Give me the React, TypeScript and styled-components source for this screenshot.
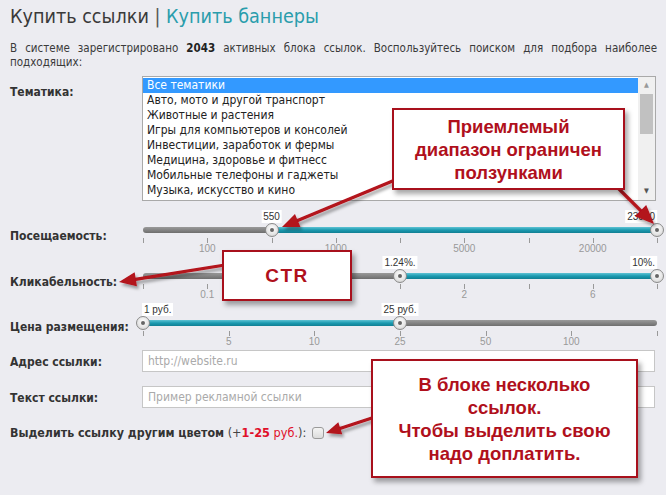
import React from 'react'
import styled, { createGlobalStyle } from 'styled-components'

const GlobalStyle = createGlobalStyle`
    html, body {
        margin: 0;
        padding: 0;
        background: #ececf1;
    }
    body {
        font-family: "DejaVu Sans Condensed", "DejaVu Sans", sans-serif;
        color: #333;
    }
`

const topics = [
    'Все тематики',
    'Авто, мото и другой транспорт',
    'Животные и растения',
    'Игры для компьютеров и консолей',
    'Инвестиции, заработок и фермы',
    'Медицина, здоровье и фитнесс',
    'Мобильные телефоны и гаджеты',
    'Музыка, искусство и кино',
]

interface Tick {
    label?: string
}

interface SliderProps {
    ticks: Tick[]
    lo: number
    hi: number
    loLabel: string
    hiLabel: string
}

const Slider = ({ ticks, lo, hi, loLabel, hiLabel }: SliderProps) => {
    const step = 100 / (ticks.length - 1)
    const align = (v: number) => (v <= 0 ? 'left' : v >= 1 ? 'right' : 'center')
    return (
        <StyledSlider>
            <Track />
            <Range style={{ left: `${lo * 100}%`, width: `${(hi - lo) * 100}%` }} />
            {[{ v: lo, t: loLabel }, { v: hi, t: hiLabel }].map((h, k) => (
                <React.Fragment key={k}>
                    <HandleLabel $align={align(h.v)} style={{ left: `${h.v * 100}%` }}>{h.t}</HandleLabel>
                    <Handle style={{ left: `${h.v * 100}%` }} />
                </React.Fragment>
            ))}
            {ticks.map((t, k) => (
                <TickMark key={k} style={{ left: `${k * step}%` }}>
                    {t.label && <span>{t.label}</span>}
                </TickMark>
            ))}
        </StyledSlider>
    )
}

const Arrow = ({ x1, y1, x2, y2, head = 16 }: { x1: number, y1: number, x2: number, y2: number, head?: number }) => {
    const len = Math.hypot(x2 - x1, y2 - y1)
    const ux = (x2 - x1) / len
    const uy = (y2 - y1) / len
    const bx = x2 - ux * head
    const by = y2 - uy * head
    const w = head * 0.42
    const pts = `${x2},${y2} ${bx - uy * w},${by + ux * w} ${bx + uy * w},${by - ux * w}`
    return (
        <g>
            <line x1={x1} y1={y1} x2={bx + ux * 2} y2={by + uy * 2} stroke="#b3121b" strokeWidth={3.2} />
            <polygon points={pts} fill="#b3121b" />
        </g>
    )
}

export default function App() {
    return (
        <Page>
            <GlobalStyle />
            <Title>Купить ссылки <span className="sep">|</span> <a>Купить баннеры</a></Title>
            <Intro>
                В системе зарегистрировано <b>2043</b> активных блока ссылок. Воспользуйтесь поиском для подбора наиболее подходящих:
            </Intro>

            <TopicRow>
                <Label $pad={9}>Тематика:</Label>
                <ListBox>
                    <Options>
                        {topics.map((t, k) => (
                            <Option key={k} $selected={k === 0}>{t}</Option>
                        ))}
                    </Options>
                    <ScrollBar>
                        <span className="up">▲</span>
                        <div className="thumb" />
                        <span className="down">▼</span>
                    </ScrollBar>
                </ListBox>
            </TopicRow>

            <SliderRow $mt={4}>
                <Label $pad={24}>Посещаемость:</Label>
                <Slider
                    ticks={[{}, { label: '100' }, {}, { label: '1000' }, {}, { label: '5000' }, {}, { label: '20000' }, {}]}
                    lo={0.25} hi={1} loLabel="550" hiLabel="23000"
                />
            </SliderRow>
            <SliderRow>
                <Label $pad={24}>Кликабельность:</Label>
                <Slider
                    ticks={[{}, { label: '0.1' }, {}, { label: '1' }, {}, { label: '2' }, {}, { label: '6' }, {}]}
                    lo={0.5} hi={1} loLabel="1.24%." hiLabel="10%."
                />
            </SliderRow>
            <SliderRow $mt={1}>
                <Label $pad={22}>Цена размещения:</Label>
                <Slider
                    ticks={[{}, { label: '5' }, { label: '10' }, { label: '25' }, { label: '50' }, { label: '100' }, {}]}
                    lo={0} hi={0.5} loLabel="1 руб." hiLabel="25 руб."
                />
            </SliderRow>

            <InputRow $mt={6}>
                <Label $pad={5}>Адрес ссылки:</Label>
                <TextInput placeholder="http://website.ru" />
            </InputRow>
            <InputRow $mt={14}>
                <Label $pad={5}>Текст ссылки:</Label>
                <TextInput placeholder="Пример рекламной ссылки" />
            </InputRow>

            <CheckRow>
                <b>Выделить ссылку другим цветом</b>
                <span>&nbsp;(+<Price>1-25</Price> <em>руб.</em>):</span>
                <Check />
            </CheckRow>

            <Arrows width={666} height={495}>
                <defs>
                    <filter id="sh" x="-10%" y="-10%" width="130%" height="130%">
                        <feDropShadow dx="2" dy="3" stdDeviation="1.6" floodColor="#000" floodOpacity="0.35" />
                    </filter>
                </defs>
                <g filter="url(#sh)">
                    <Arrow x1={395} y1={180} x2={282} y2={227} head={17} />
                    <Arrow x1={618} y1={188} x2={654} y2={224} head={19} />
                    <Arrow x1={225} y1={265} x2={119} y2={282} head={17} />
                    <Arrow x1={375} y1={417} x2={326} y2={433} head={15} />
                </g>
            </Arrows>

            <Callout $left={392} $top={108} $w={233} $h={82}>
                Приемлемый<br />диапазон ограничен<br />ползунками
            </Callout>
            <Callout $left={222} $top={250} $w={130} $h={51} $big>
                CTR
            </Callout>
            <Callout $left={371} $top={359} $w={267} $h={119}>
                В блоке несколько<br />ссылок.<br />Чтобы выделить свою<br />надо доплатить.
            </Callout>
        </Page>
    )
}

const Page = styled.div`
    position: relative;
    width: 666px;
    height: 495px;
    box-sizing: border-box;
    padding: 0 9px 0 10px;
    overflow: hidden;
    font-size: 12px;
`

const Title = styled.h1`
    margin: 4px 0 0;
    font-weight: normal;
    font-size: 19.6px;
    line-height: 26px;
    color: #3a3a3a;
    .sep {
        color: #555;
    }
    a {
        color: #2a9dac;
    }
`

const Intro = styled.p`
    margin: 11px 0 0;
    font-size: 11.5px;
    line-height: 14px;
    text-align: justify;
    color: #3a3a3a;
    b {
        color: #222;
    }
`

const Row = styled.div`
    display: grid;
    grid-template-columns: 132px 1fr;
`

const TopicRow = styled(Row)`
    margin-top: 7px;
`

const SliderRow = styled(Row)<{ $mt?: number }>`
    margin-top: ${p => p.$mt ?? 0}px;
`

const InputRow = styled(Row)<{ $mt: number }>`
    margin-top: ${p => p.$mt}px;
`

const Label = styled.div<{ $pad: number }>`
    padding-top: ${p => p.$pad}px;
    font-weight: bold;
    font-size: 12px;
    line-height: 14px;
    color: #333;
`

const ListBox = styled.div`
    display: flex;
    height: 125px;
    border: 1px solid #a9a9a9;
    background: #fff;
    box-sizing: border-box;
    width: 514px;
`

const Options = styled.div`
    flex: 1;
    padding-top: 1px;
`

const Option = styled.div<{ $selected?: boolean }>`
    height: 15px;
    line-height: 15px;
    padding-left: 4px;
    font-size: 12px;
    color: ${p => (p.$selected ? '#fff' : '#222')};
    background: ${p => (p.$selected ? '#3399ff' : 'transparent')};
`

const ScrollBar = styled.div`
    width: 17px;
    background: #f0f0f0;
    display: flex;
    flex-direction: column;
    align-items: center;
    color: #999;
    font-size: 7px;
    .up {
        height: 17px;
        line-height: 17px;
    }
    .thumb {
        width: 13px;
        height: 40px;
        background: #c1c1c1;
    }
    .down {
        margin-top: auto;
        height: 17px;
        line-height: 17px;
        color: #555;
    }
`

const StyledSlider = styled.div`
    position: relative;
    height: 46px;
    margin-left: 1px;
    width: 514px;
`

const Track = styled.div`
    position: absolute;
    left: 0;
    right: 0;
    top: 22px;
    height: 6px;
    border-radius: 3px;
    background: linear-gradient(#9a9a9a, #6e6e6e);
`

const Range = styled.div`
    position: absolute;
    top: 22px;
    height: 6px;
    border-radius: 3px;
    background: linear-gradient(#5fc3d4, #1b9ab0 50%, #117f93);
`

const Handle = styled.div`
    position: absolute;
    top: 18px;
    width: 14px;
    height: 14px;
    margin-left: -7px;
    box-sizing: border-box;
    border-radius: 50%;
    border: 1px solid #8a8a8a;
    background: radial-gradient(circle at 50% 40%, #fff, #e4e4e4 60%, #c4c4c4);
    &::after {
        content: '';
        position: absolute;
        left: 4px;
        top: 4px;
        width: 4px;
        height: 4px;
        border-radius: 50%;
        background: #666;
    }
`

const HandleLabel = styled.div<{ $align: string }>`
    position: absolute;
    top: 5px;
    padding: 0 2px;
    height: 13px;
    line-height: 13px;
    background: #fff;
    font-family: "Liberation Sans", Arial, sans-serif;
    font-size: 10px;
    color: #333;
    white-space: nowrap;
    transform: ${p => (p.$align === 'left' ? 'translateX(-1px)' : p.$align === 'right' ? 'translateX(-100%)' : 'translateX(-50%)')};
`

const TickMark = styled.div`
    position: absolute;
    top: 33px;
    width: 1px;
    height: 5px;
    background: #999;
    span {
        position: absolute;
        top: 5px;
        left: 0;
        transform: translateX(-50%);
        font-family: "Liberation Sans", Arial, sans-serif;
        font-size: 10px;
        line-height: 11px;
        color: #999;
        white-space: nowrap;
    }
`

const TextInput = styled.input`
    width: 513px;
    height: 22px;
    box-sizing: border-box;
    border: 1px solid #c6c6c6;
    background: #fff;
    padding: 0 5px;
    font-family: inherit;
    font-size: 12px;
    outline: 0;
    &::placeholder {
        color: #aaa;
    }
`

const CheckRow = styled.div`
    margin-top: 18px;
    display: flex;
    align-items: center;
    font-size: 12.3px;
    line-height: 14px;
    b {
        color: #333;
    }
    span {
        color: #444;
        font-size: 12.6px;
    }
    em {
        font-style: normal;
        color: #e0102a;
    }
`

const Price = styled.b`
    color: #e0102a !important;
`

const Check = styled.div`
    margin-left: 6px;
    width: 12px;
    height: 12px;
    box-sizing: border-box;
    border: 1px solid #9a9a9a;
    border-radius: 3px;
    background: linear-gradient(#f4f4f4, #dcdcdc);
`

const Arrows = styled.svg`
    position: absolute;
    left: 0;
    top: 0;
    pointer-events: none;
    z-index: 1;
`

const Callout = styled.div<{ $left: number, $top: number, $w: number, $h: number, $big?: boolean }>`
    position: absolute;
    z-index: 2;
    left: ${p => p.$left}px;
    top: ${p => p.$top}px;
    width: ${p => p.$w}px;
    height: ${p => p.$h}px;
    box-sizing: border-box;
    border: 2px solid #a8101c;
    background: #fff;
    box-shadow: 3px 4px 5px rgba(0, 0, 0, 0.35);
    display: flex;
    align-items: center;
    justify-content: center;
    text-align: center;
    font-family: "Liberation Sans", Arial, sans-serif;
    font-weight: bold;
    font-size: ${p => (p.$big ? 19 : 18.5)}px;
    letter-spacing: ${p => (p.$big ? 1.5 : 0)}px;
    line-height: 23px;
    color: #b0101c;
`
